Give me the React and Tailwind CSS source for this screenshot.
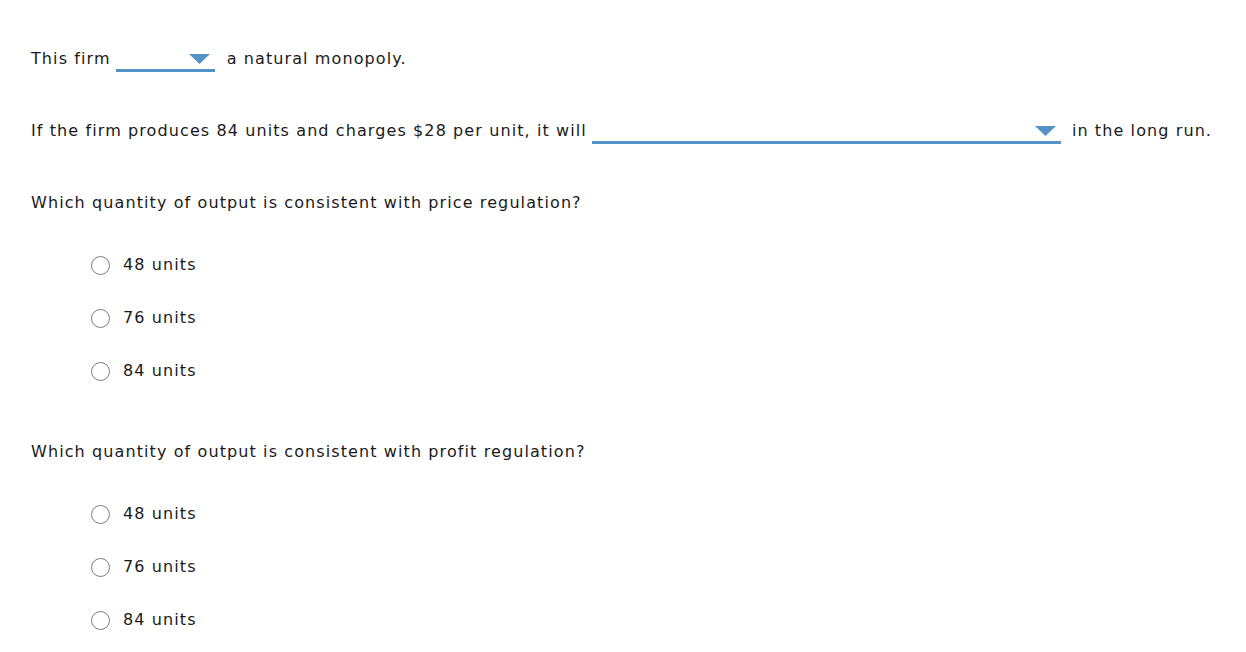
export default function App() {
  const Caret = () => (
    <svg width="21" height="10" viewBox="0 0 21 10" className="block">
      <polygon points="0,0 21,0 10.5,10" fill="#5592c8" />
    </svg>
  );

  const Dropdown = ({ width }) => (
    <span
      className={`${width} h-[26px] flex items-start justify-end pt-2 pr-[5px] border-b-[3px] border-[#5592c8]`}
    >
      <Caret />
    </span>
  );

  const Radio = ({ label, className }) => (
    <label className={`flex items-center h-6 pl-[60px] ${className}`}>
      <span className="w-[19px] h-[19px] rounded-full border border-[#7d7d7d] bg-white shrink-0" />
      <span className="ml-[13px]">{label}</span>
    </label>
  );

  return (
    <div
      className="min-h-screen bg-white text-[16px] tracking-[1.1px] text-[#1a1a1a] pl-[31px] pt-[47px]"
      style={{ fontFamily: '"DejaVu Sans", Verdana, sans-serif' }}
    >
      <div className="flex items-center h-6">
        <span>This firm</span>
        <span className="ml-[5px]">
          <Dropdown width="w-[99px]" />
        </span>
        <span className="ml-[12px]">a natural monopoly.</span>
      </div>

      <div className="flex items-center h-6 mt-[48px]">
        <span>If the firm produces 84 units and charges $28 per unit, it will</span>
        <span className="ml-[5px]">
          <Dropdown width="w-[469px]" />
        </span>
        <span className="ml-[11px]">in the long run.</span>
      </div>

      <div className="flex items-center h-6 mt-[48px]">
        Which quantity of output is consistent with price regulation?
      </div>
      <Radio label="48 units" className="mt-[38px]" />
      <Radio label="76 units" className="mt-[29px]" />
      <Radio label="84 units" className="mt-[29px]" />

      <div className="flex items-center h-6 mt-[57px]">
        Which quantity of output is consistent with profit regulation?
      </div>
      <Radio label="48 units" className="mt-[38px]" />
      <Radio label="76 units" className="mt-[29px]" />
      <Radio label="84 units" className="mt-[29px]" />
    </div>
  );
}
